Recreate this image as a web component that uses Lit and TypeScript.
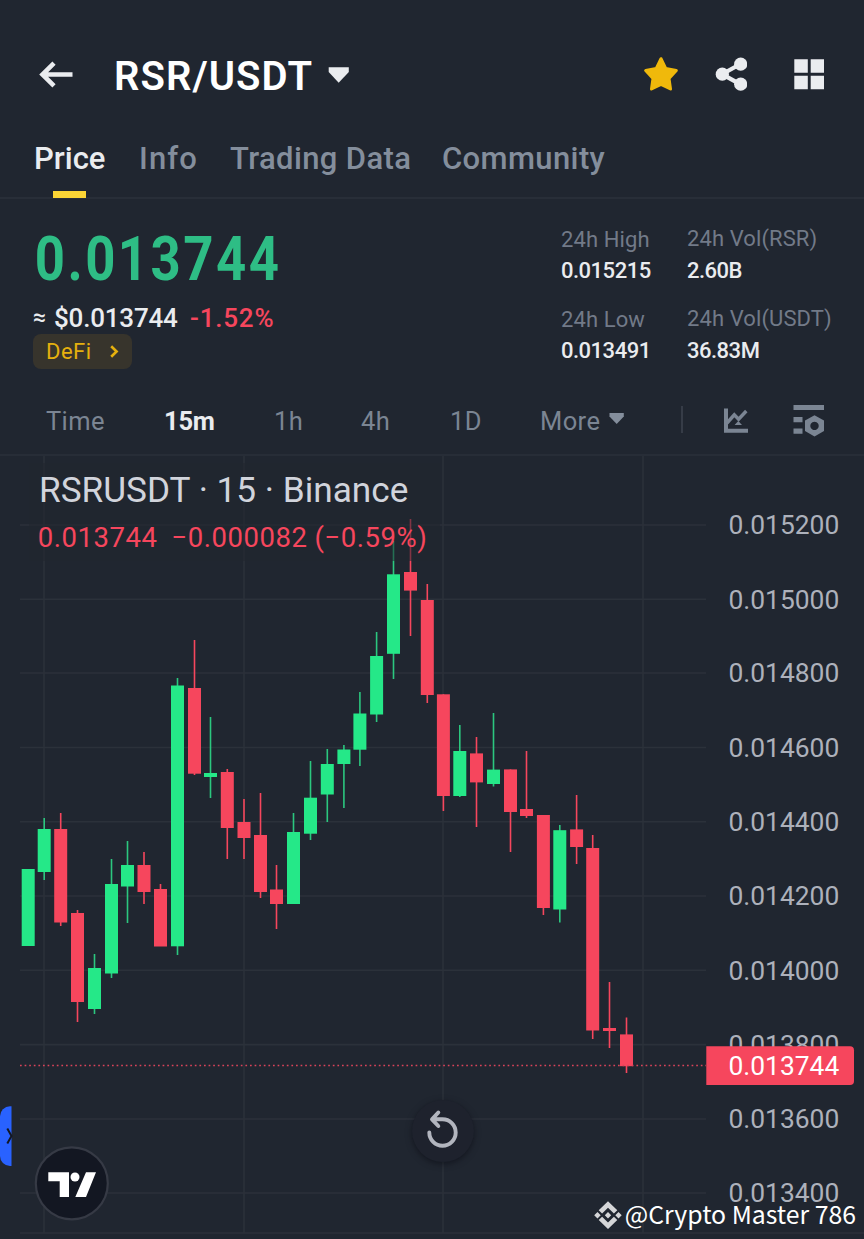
import { LitElement, html, svg, css } from "lit";
import { customElement, property } from "lit/decorators.js";
import { classMap } from "lit/directives/class-map.js";

type Candle = [x: number, up: number, open: number, close: number, high: number, low: number];

// left edge, rising flag, body top, body bottom, wick top, wick bottom
const CANDLES: Candle[] = [
  [21.7, 1, 869, 946, 869, 946],
  [37.7, 1, 829, 872, 818, 880],
  [54.2, 0, 829, 922.5, 813, 926],
  [71, 0, 913, 1002, 910, 1022],
  [88, 1, 968, 1009, 954, 1014],
  [105, 1, 884, 973.5, 859, 978],
  [121, 1, 865, 886.5, 841, 923],
  [137.5, 0, 865, 892, 852, 904],
  [154, 0, 889, 946.5, 884, 946],
  [171, 1, 685.5, 946.3, 678, 955],
  [188, 0, 688, 773.7, 640, 775],
  [204, 1, 773, 777, 717, 798],
  [220.8, 0, 772, 828, 769, 859],
  [237.5, 0, 822, 838, 799, 859],
  [254, 0, 835, 892, 793, 898],
  [270, 0, 889.5, 904, 865, 929],
  [287, 1, 832, 904, 813, 904],
  [304, 1, 797.7, 833.7, 761, 840],
  [320.8, 1, 764, 794.5, 749, 822],
  [337.4, 1, 749.5, 764, 745, 808],
  [353.4, 1, 713.5, 749.7, 692, 766],
  [370.1, 1, 656, 714.5, 632, 722],
  [387, 1, 574.3, 653.8, 541, 679],
  [404, 0, 572, 590.6, 519, 636],
  [420.8, 0, 600, 695, 584, 703],
  [436.9, 0, 694.3, 796, 694.3, 811],
  [453.3, 1, 751, 796, 725, 797],
  [470, 0, 753.4, 782.4, 737, 827],
  [487, 1, 769.6, 784, 713, 786.5],
  [504, 0, 769.4, 812, 769.4, 852],
  [520, 0, 809, 816, 751, 818],
  [536.9, 0, 815, 908, 815, 915],
  [553.3, 1, 830.2, 909.5, 825, 922.5],
  [570.1, 0, 829.4, 847, 795, 864],
  [586.2, 0, 848, 1030.5, 835, 1039],
  [603, 0, 1028, 1031, 982, 1048],
  [620, 0, 1034.4, 1066.2, 1017.5, 1073],
];

const LEVELS: [string, number][] = [
  ["0.015200", 525],
  ["0.015000", 599.3],
  ["0.014800", 673],
  ["0.014600", 747.5],
  ["0.014400", 821.7],
  ["0.014200", 896],
  ["0.014000", 970.3],
  ["0.013800", 1044.6],
  ["0.013600", 1119],
  ["0.013400", 1193],
];

const COLUMNS = [44, 244, 443, 643];

@customElement("pair-header")
export class PairHeader extends LitElement {
  static styles = css`
    :host {
      display: grid;
      grid-template-columns: 114px 214px 1fr auto;
      align-items: center;
      height: 122px;
      padding: 28px 39px 0 0;
      box-sizing: border-box;
      font-family: Roboto, sans-serif;
    }
    svg {
      display: block;
    }
    .back {
      margin-left: 38px;
    }
    .pair {
      color: #fff;
      font-size: 40px;
      line-height: 48px;
      font-weight: 600;
      letter-spacing: 1.05px;
      padding-top: 4px;
      white-space: nowrap;
    }
    .actions {
      display: flex;
      gap: 37px;
      align-items: center;
      margin-bottom: 2px;
    }
    .actions svg:last-child {
      margin-left: 9px;
    }
  `;
  render() {
    return html`
      <svg class="back" width="36" height="30" viewBox="38 60 36 30" fill="none" stroke="#eaecef" stroke-width="4.6">
        <path d="M72.500 74.500H43M54 63.200L42.500 74.500L54 85.800" />
      </svg>
      <span class="pair">RSR/USDT</span>
      <svg width="22" height="16" viewBox="0 0 22 16" fill="#eaecef">
        <path d="M0.700 0.300H20.800V5L10.700 15.800L0.700 5Z" />
      </svg>
      <div class="actions">
        <svg width="34" height="36" viewBox="644 56 34 36" fill="#f0b90b" stroke="#f0b90b" stroke-width="3" stroke-linejoin="round">
          <path d="M661 58.700L665.700 68.500L676.300 70.500L669 78.500L670.500 89L661 84.300L651.500 89L653 78.500L645.700 70.500L656.300 68.500Z" />
        </svg>
        <svg width="32" height="36" viewBox="715 56 32 36" fill="#eaecef">
          <path d="M740.500 64L722 74.200L740.500 84.300" fill="none" stroke="#eaecef" stroke-width="4.200" />
          <circle cx="722.300" cy="74.200" r="6.600" />
          <circle cx="740.700" cy="64.200" r="6.600" />
          <circle cx="740.700" cy="84.200" r="6.600" />
        </svg>
        <svg width="32" height="32" viewBox="793 58 32 32" fill="#eaecef">
          <path d="M794.300 59.300h13.500v13.500h-13.500zM810.700 59.300h13.300v13.500h-13.300zM794.300 75.700h13.500v13.500h-13.500zM810.700 75.700h13.300v13.500h-13.300z" />
        </svg>
      </div>
    `;
  }
}

@customElement("page-tabs")
export class PageTabs extends LitElement {
  static styles = css`
    :host {
      display: grid;
      grid-template-columns: 105px 91px 212px 1fr;
      height: 77px;
      padding-left: 34px;
      box-sizing: border-box;
      border-bottom: 2px solid #282e38;
      font: 500 31px/74px Roboto, sans-serif;
      color: #848e9c;
    }
    .tab {
      display: flex;
      flex-direction: column;
      white-space: nowrap;
      height: 76px;
    }
    .active {
      color: #eaecef;
      width: 70px;
    }
    .active::after {
      content: "";
      width: 33px;
      height: 7px;
      margin: -5px auto 0;
      background: #fcd535;
    }
    .i1 {
      letter-spacing: 1.1px;
    }
    .i2,
    .i3 {
      letter-spacing: 0.38px;
    }
  `;
  render() {
    return ["Price", "Info", "Trading Data", "Community"].map(
      (name, i) => html`<span class=${classMap({ tab: true, active: i === 0, ["i" + i]: true })}>${name}</span>`
    );
  }
}

@customElement("price-summary")
export class PriceSummary extends LitElement {
  static styles = css`
    :host {
      display: grid;
      grid-template-columns: 528px 126px 1fr;
      height: 191px;
      padding-left: 33px;
      box-sizing: border-box;
      font-family: Roboto, sans-serif;
      color: #eaecef;
      white-space: nowrap;
    }
    .last {
      height: 79px;
      margin-top: 24px;
      padding-left: 2px;
      font-size: 62px;
      line-height: 72px;
      font-weight: 700;
      letter-spacing: 2.9px;
      color: #2ebd85;
      transform: scaleX(0.85);
      transform-origin: left;
    }
    .sub {
      display: flex;
      font-size: 26px;
      line-height: 32px;
      font-weight: 500;
    }
    .approx {
      width: 21px;
      font-size: 23px;
    }
    .fiat {
      width: 136px;
      letter-spacing: -0.2px;
    }
    .change {
      color: #f6465d;
      letter-spacing: 0.8px;
    }
    .tag {
      display: flex;
      align-items: center;
      width: 99px;
      height: 35px;
      padding: 0 13px;
      box-sizing: border-box;
      justify-content: space-between;
      border-radius: 8px;
      background: #37342c;
      color: #e5b00e;
      font-size: 22px;
      letter-spacing: 0.5px;
    }
    .stats {
      display: grid;
      grid-template-rows: 32px 48px 32px 32px;
      padding-top: 27px;
      font-size: 22px;
      line-height: 28px;
      align-content: start;
    }
    .stats.vol {
      padding-top: 26px;
    }
    .label {
      color: #727a88;
      letter-spacing: 0.1px;
    }
    .value {
      font-weight: 500;
    }
    .stats .value {
      letter-spacing: -0.5px;
    }
    .stats:not(.vol) .value {
      margin-top: -1px;
    }
  `;
  render() {
    return html`
      <div>
        <div class="last">0.013744</div>
        <div class="sub">
          <span class="approx">≈</span><span class="fiat">$0.013744</span><span class="change">-1.52%</span>
        </div>
        <div class="tag">
          <span>DeFi</span>
          <svg width="9" height="13" viewBox="0 0 9 13" fill="none" stroke="#e5b00e" stroke-width="2.600">
            <path d="M1.200 1.200L6.600 6.500L1.200 11.800" />
          </svg>
        </div>
      </div>
      <div class="stats">
        <span class="label">24h High</span><span class="value">0.015215</span>
        <span class="label">24h Low</span><span class="value">0.013491</span>
      </div>
      <div class="stats vol">
        <span class="label">24h Vol(RSR)</span><span class="value">2.60B</span>
        <span class="label">24h Vol(USDT)</span><span class="value">36.83M</span>
      </div>
    `;
  }
}

@customElement("interval-bar")
export class IntervalBar extends LitElement {
  @property() selected = "15m";
  static styles = css`
    :host {
      display: grid;
      grid-template-columns: 118px 110px 87px 89px 90px 69px 72px 42px 69px 1fr;
      align-items: center;
      height: 66px;
      padding: 0 0 2px 46px;
      box-sizing: border-box;
      border-bottom: 2.5px solid #272d37;
      font: 400 25.500px/32px Roboto, sans-serif;
      letter-spacing: 0.4px;
      color: #7b8593;
    }
    svg {
      display: block;
      margin-bottom: 1px;
    }
    .on {
      color: #eaecef;
      font-weight: 700;
      letter-spacing: -0.2px;
    }
    .rule {
      width: 2px;
      height: 27px;
      margin-bottom: 4px;
      background: #363c47;
    }
    .caret {
      margin-bottom: 5px;
    }
  `;
  render() {
    return html`
      ${["Time", "15m", "1h", "4h", "1D", "More"].map(
        (name) => html`<span class=${classMap({ on: name === this.selected })}>${name}</span>`
      )}
      <svg class="caret" width="16" height="11" viewBox="0 0 16 11" fill="#848e9c">
        <path d="M0.500 0H14.800V3.500L7.700 11L0.500 3.500Z" />
      </svg>
      <span class="rule"></span>
      <svg width="28" height="32" viewBox="723 404 28 32">
        <path d="M726 407.500V429.700H748" fill="none" stroke="#7b8593" stroke-width="4" />
        <path d="M727 422L734.300 413.800L738.600 418.200L746.300 410" fill="none" stroke="#7b8593" stroke-width="3.400" />
        <path d="M738.300 420L742 424H734.600Z" fill="#7b8593" />
      </svg>
      <svg width="34" height="34" viewBox="792 404 34 34" fill="#7b8593">
        <path d="M793.500 405h30.500v5h-30.500zM793.500 417h9v5.300h-9zM793.500 428.500h9v5.300h-9z" />
        <path fill-rule="evenodd" d="M814.500 415.300L824 420.500V431L814.500 436.500L805 431V420.500ZM814.500 421.700a4.200 4.200 0 1 0 .010 0Z" />
      </svg>
    `;
  }
}

@customElement("candle-chart")
export class CandleChart extends LitElement {
  static styles = css`
    :host {
      display: block;
      height: 783px;
    }
    svg {
      display: block;
      font-family: Roboto, sans-serif;
    }
    .grid {
      stroke: #2b313a;
      stroke-width: 1.6;
    }
    .up {
      fill: #25e888;
    }
    .down {
      fill: #f6465d;
    }
    .wick.up {
      fill: #2bc77f;
    }
    .veil {
      fill: #202630;
      opacity: 0.55;
    }
    .name {
      font-size: 35.2px;
      fill: #d1d4dc;
    }
    .quote {
      font-size: 27.5px;
      letter-spacing: 0.55px;
      fill: #f6465d;
    }
    .axis {
      font-size: 26.4px;
      fill: #adb1bb;
    }
    .axis.now {
      fill: #fff;
    }
    .last {
      stroke: #d9435a;
      stroke-width: 1.7;
      stroke-dasharray: 1.7 2.9;
    }
    .disc {
      fill: #1e222d;
      filter: drop-shadow(0 2px 3px rgba(10, 12, 20, 0.6));
    }
    .reset {
      fill: none;
      stroke: #b2b5be;
      stroke-width: 3.9;
      stroke-linecap: round;
      stroke-linejoin: round;
    }
    .credit {
      font: 400 24.8px "Noto Sans CJK SC", sans-serif;
      fill: #fff;
    }
  `;

  private candle([x, up, top, bottom, high, low]: Candle) {
    const tone = up ? "up" : "down";
    return svg`
      <rect class="wick ${tone}" x=${x + 5.7} y=${high} width="1.6" height=${low - high}></rect>
      <rect class=${tone} x=${x} y=${top} width="13" height=${bottom - top}></rect>`;
  }

  render() {
    return html`
      <svg width="864" height="783" viewBox="0 456 864 783">
        ${COLUMNS.map((x) => svg`<line class="grid" x1=${x} x2=${x} y1="456" y2="1233"></line>`)}
        ${LEVELS.map(([, y]) => svg`<line class="grid" x1="20" x2="706" y1=${y} y2=${y}></line>`)}
        <line class="grid" x1="20" x2="864" y1="1233" y2="1233" />
        ${CANDLES.map((c) => this.candle(c))}
        <line class="last" x1="20" x2="706" y1="1065.500" y2="1065.500" />

        <rect class="veil" x="29" y="463" width="411" height="98" />
        <text class="name" x="39" y="501.500">RSRUSDT · 15 · Binance</text>
        <text class="quote" y="547"><tspan x="37.700">0.013744</tspan><tspan x="171.500">−0.000082</tspan><tspan x="314.500">(−0.59%)</tspan></text>

        ${LEVELS.map(([label, y]) => svg`<text class="axis" x="728.500" y=${y + 9.3}>${label}</text>`)}
        <path class="down" d="M706.300 1046.300H850a4 4 0 0 1 4 4V1081a4 4 0 0 1-4 4H706.300Z" />
        <text class="axis now" x="728.500" y="1075">0.013744</text>

        <path d="M11.500 1106.300H10A10 10 0 0 0 0 1116.300V1156A10 10 0 0 0 10 1166H11.500Z" fill="#2962ff" />
        <path d="M7.300 1128.500L11.500 1136L7.300 1143.500" fill="none" stroke="#131722" stroke-width="2" />

        <circle cx="71.800" cy="1183.300" r="36" fill="#131722" stroke="#363a45" stroke-width="2.200" />
        <path d="M48.300 1172.300H69V1197H59.700V1181.300H48.300ZM86 1172.300H96L86 1197H75.300Z" fill="#fff" />
        <circle cx="75" cy="1177" r="4.500" fill="#fff" />

        <circle class="disc" cx="443" cy="1131" r="31" />
        <path class="reset" d="M429.300 1132.500A13.200 13.200 0 1 0 442.500 1119.300H432.500M438.300 1112.500L432 1119.300L438.300 1126" />

        <g fill="#d5d6d8">
          <path d="M608 1201.300L617.300 1210.300L613.900 1213.500L608 1207.800L602.100 1213.500L598.700 1210.300ZM608 1229L617.300 1220L613.900 1216.700L608 1222.400L602.100 1216.700L598.700 1220Z" />
          <path d="M608 1212L611.200 1215.200L608 1218.400L604.800 1215.200ZM597.500 1211.900L600.700 1215.200L597.500 1218.500L594.200 1215.200ZM618.500 1211.900L621.700 1215.200L618.500 1218.500L615.300 1215.200Z" />
        </g>
        <text class="credit" x="624.700" y="1224">@Crypto Master 786</text>
      </svg>
    `;
  }
}

@customElement("app-root")
export class AppRoot extends LitElement {
  static styles = css`
    :host {
      display: flex;
      flex-direction: column;
      height: 1239px;
      overflow: hidden;
      background: #202630;
    }
  `;
  render() {
    return html`
      <pair-header></pair-header>
      <page-tabs></page-tabs>
      <price-summary></price-summary>
      <interval-bar></interval-bar>
      <candle-chart></candle-chart>
    `;
  }
}
